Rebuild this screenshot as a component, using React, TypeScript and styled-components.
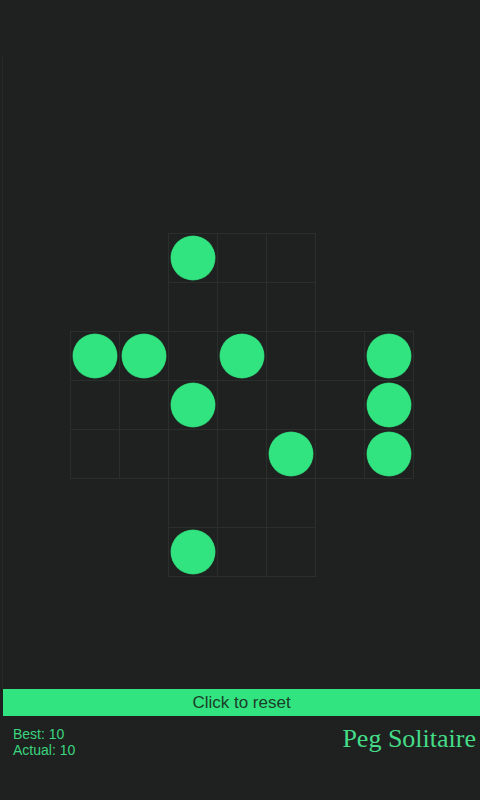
import React from "react";
import styled, { createGlobalStyle } from "styled-components";

const GlobalStyle = createGlobalStyle`
  html, body {
    margin: 0;
    padding: 0;
    background: #1e211f;
  }
`;

const Page = styled.div`
  width: 480px;
  height: 800px;
  display: flex;
  flex-direction: column;
  background: #1e211f;
  overflow: hidden;
`;

/* playfield */

const Field = styled.main`
  margin: 55px 0 0 2px;
  height: 634px;
  border-left: 1px solid #262a27;
  display: flex;
  justify-content: center;
  align-items: flex-start;
  padding-top: 178px;
  box-sizing: border-box;
`;

const Board = styled.div`
  display: grid;
  grid-template-columns: repeat(7, 49px);
  grid-template-rows: repeat(7, 49px);
  width: 344px;
  height: 344px;
`;

const Cell = styled.div<{ $row: number; $col: number }>`
  grid-row: ${(p) => p.$row + 1};
  grid-column: ${(p) => p.$col + 1};
  width: 50px;
  height: 50px;
  box-sizing: border-box;
  border: 1px solid #2b2f2c;
  display: flex;
  align-items: center;
  justify-content: center;
`;

const Peg = styled.div`
  width: 44px;
  height: 44px;
  border-radius: 50%;
  background: #32e480;
  box-shadow: 0 0 0 0.5px #2bb868;
`;

/* footer */

const Footer = styled.footer`
  margin-left: 3px;
  display: flex;
  flex-direction: column;
`;

const ResetButton = styled.button`
  height: 27px;
  width: 477px;
  border: none;
  padding: 0;
  background: #32e480;
  color: #1a3d29;
  font-family: "Liberation Sans", Arial, sans-serif;
  font-size: 17px;
  line-height: 27px;
  cursor: pointer;
`;

const InfoRow = styled.div`
  display: flex;
  justify-content: space-between;
  align-items: flex-start;
  padding: 8px 4px 0 10px;
`;

const Stats = styled.div`
  margin-top: 2px;
  font-family: "Liberation Sans", Arial, sans-serif;
  font-size: 14px;
  line-height: 16px;
  color: #3bd57f;
`;

const Title = styled.div`
  font-family: "Liberation Serif", "Times New Roman", serif;
  font-size: 26px;
  line-height: 30px;
  color: #45dc88;
`;

const isValid = (r: number, c: number) =>
  (r >= 2 && r <= 4) || (c >= 2 && c <= 4);

const pegs = new Set([
  "0-2",
  "2-0",
  "2-1",
  "2-3",
  "2-6",
  "3-2",
  "3-6",
  "4-4",
  "4-6",
  "6-2",
]);

export default function App() {
  const cells: React.ReactNode[] = [];
  for (let r = 0; r < 7; r++) {
    for (let c = 0; c < 7; c++) {
      if (!isValid(r, c)) continue;
      cells.push(
        <Cell key={`${r}-${c}`} $row={r} $col={c}>
          {pegs.has(`${r}-${c}`) && <Peg />}
        </Cell>
      );
    }
  }

  return (
    <Page>
      <GlobalStyle />
      <Field>
        <Board>{cells}</Board>
      </Field>
      <Footer>
        <ResetButton>Click to reset</ResetButton>
        <InfoRow>
          <Stats>
            <div>Best: 10</div>
            <div>Actual: 10</div>
          </Stats>
          <Title>Peg Solitaire</Title>
        </InfoRow>
      </Footer>
    </Page>
  );
}
